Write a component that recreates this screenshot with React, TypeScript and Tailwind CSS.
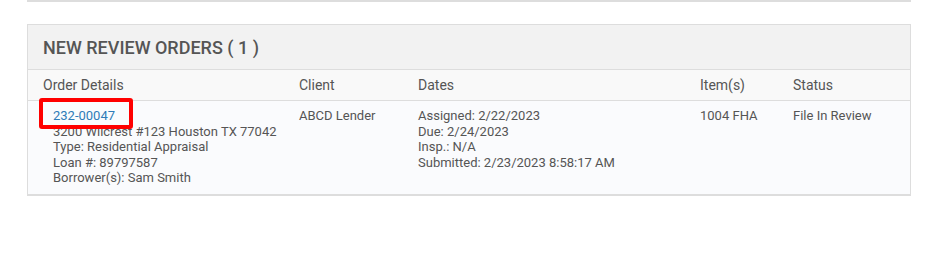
import React from "react";

export default function App() {
  return (
    <div className="w-[943px] h-[253px] bg-white px-[27px] text-[#555]" style={{ fontFamily: "Roboto, 'Liberation Sans', sans-serif" }}>
      <div className="h-[2px] bg-[#dddddd] w-[884px]" />
      <div className="mt-[22px] w-[884px] border border-b-2 border-[#dddddd]">
        <div className="h-[45px] bg-[#f2f2f2] border-b border-[#dddddd] flex items-center px-[15px]">
          <h2 className="text-[18px] font-medium text-[#555] leading-none pt-[1px]">NEW REVIEW ORDERS ( 1 )</h2>
        </div>
        <div className="grid grid-cols-[256px_119px_282px_93px_1fr]">
          <div className="h-[31px] bg-[#f9f9f9] border-b border-[#dddddd] flex items-center px-[15px] text-[14px]">Order Details</div>
          <div className="h-[31px] bg-[#f9f9f9] border-b border-[#dddddd] flex items-center px-[15px] text-[14px]">Client</div>
          <div className="h-[31px] bg-[#f9f9f9] border-b border-[#dddddd] flex items-center px-[15px] text-[14px]">Dates</div>
          <div className="h-[31px] bg-[#f9f9f9] border-b border-[#dddddd] flex items-center px-[15px] text-[14px]">Item(s)</div>
          <div className="h-[31px] bg-[#f9f9f9] border-b border-[#dddddd] flex items-center px-[15px] text-[14px]">Status</div>

          <div className="bg-[#fafbfd] pt-[7px] pb-[8px] pl-[25px] text-[13px] leading-[15.5px] whitespace-nowrap">
            <div className="relative">
              <a className="text-[#2e7bb8]" href="#">232-00047</a>
              <span className="absolute left-[-14px] top-[-10px] w-[94px] h-[31px] border-[4px] border-[#ff0000] rounded-[3px] pointer-events-none" />
            </div>
            <div>3200 Wilcrest #123 Houston TX 77042</div>
            <div>Type: Residential Appraisal</div>
            <div>Loan #: 89797587</div>
            <div>Borrower(s): Sam Smith</div>
          </div>
          <div className="bg-[#fafbfd] pt-[7px] px-[15px] text-[13px] leading-[15.5px]">ABCD Lender</div>
          <div className="bg-[#fafbfd] pt-[7px] px-[15px] text-[13px] leading-[15.5px] whitespace-nowrap">
            <div>Assigned: 2/22/2023</div>
            <div>Due: 2/24/2023</div>
            <div>Insp.: N/A</div>
            <div>Submitted: 2/23/2023 8:58:17 AM</div>
          </div>
          <div className="bg-[#fafbfd] pt-[7px] px-[15px] text-[13px] leading-[15.5px]">1004 FHA</div>
          <div className="bg-[#fafbfd] pt-[7px] px-[15px] text-[13px] leading-[15.5px]">File In Review</div>
        </div>
      </div>
    </div>
  );
}
